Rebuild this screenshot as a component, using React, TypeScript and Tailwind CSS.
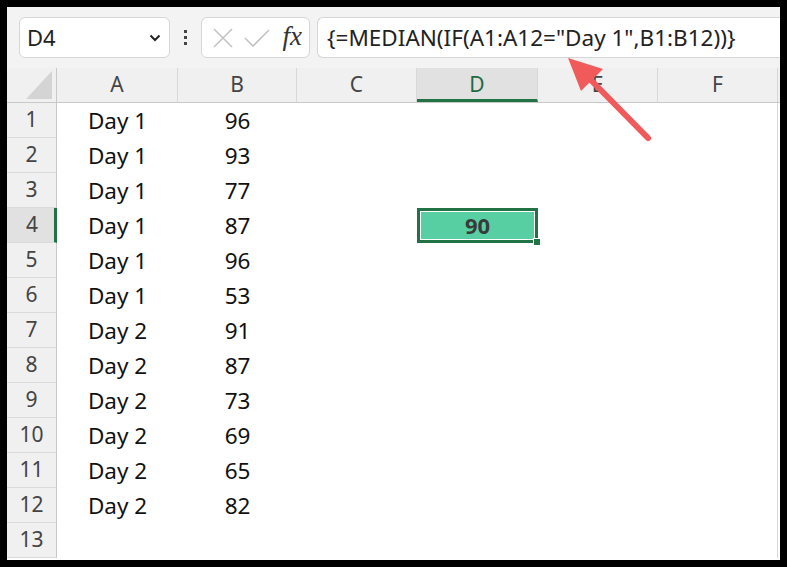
import React from 'react';

const cols = [
  { name: 'A', w: 'w-[121px]' },
  { name: 'B', w: 'w-[119px]' },
  { name: 'C', w: 'w-[120px]' },
  { name: 'D', w: 'w-[121px]' },
  { name: 'E', w: 'w-[120px]' },
  { name: 'F', w: 'w-[120px]' },
];

const data: [string, number][] = [
  ['Day 1', 96],
  ['Day 1', 93],
  ['Day 1', 77],
  ['Day 1', 87],
  ['Day 1', 96],
  ['Day 1', 53],
  ['Day 2', 91],
  ['Day 2', 87],
  ['Day 2', 73],
  ['Day 2', 69],
  ['Day 2', 65],
  ['Day 2', 82],
];

const font = { fontFamily: '"Noto Sans", "Open Sans", sans-serif' };

const App: React.FC = () => {
  const rows = [...data.map((d) => d as [string, number] | null), null];

  return (
    <div className="w-[787px] h-[567px] bg-black p-[7px]" style={font}>
      <div className="relative w-full h-full bg-white overflow-hidden flex flex-col">
        {/* formula bar */}
        <div className="h-[61px] bg-[#f3f3f3] flex items-start pt-[10px] pl-[12px] shrink-0">
          <div className="w-[151px] h-[41px] bg-white border border-[#d6d6d6] rounded-[6px] flex items-center justify-between pl-[7px] pr-[8px]">
            <span className="text-[22px] text-[#222]">D4</span>
            <svg width="12" height="8" viewBox="0 0 12 8">
              <path d="M1.5 1.5 L6 6 L10.5 1.5" fill="none" stroke="#222" strokeWidth="2" />
            </svg>
          </div>
          <div className="w-[31px] h-[41px] flex flex-col items-center justify-center gap-[3px]">
            <span className="w-[3px] h-[3px] bg-[#444]" />
            <span className="w-[3px] h-[3px] bg-[#444]" />
            <span className="w-[3px] h-[3px] bg-[#444]" />
          </div>
          <div className="w-[109px] h-[41px] bg-white border border-[#d6d6d6] rounded-[6px] flex items-center pl-[9px] pr-[7px]">
            <svg width="24" height="24" viewBox="0 0 24 24">
              <path d="M3 3 L21 21 M21 3 L3 21" stroke="#c4c4c4" strokeWidth="1.6" />
            </svg>
            <svg width="30" height="22" viewBox="0 0 30 22" className="ml-[7px]">
              <path d="M3 11 L11 19 L27 3" fill="none" stroke="#c4c4c4" strokeWidth="1.6" />
            </svg>
            <span
              className="ml-auto text-[27px] italic text-[#333] leading-none pb-[3px]"
              style={{ fontFamily: '"Liberation Serif", "DejaVu Serif", serif' }}
            >
              fx
            </span>
          </div>
          <div className="ml-[7px] flex-1 h-[41px] bg-white border border-r-0 border-[#d6d6d6] rounded-l-[6px] flex items-center pl-[9px]">
            <span className="text-[22.5px] text-[#222] whitespace-nowrap">
              {'{=MEDIAN(IF(A1:A12="Day 1",B1:B12))}'}
            </span>
          </div>
        </div>

        {/* column header */}
        <div className="h-[35px] flex bg-[#f0f0f0] border-b border-[#c8c8c8] shrink-0">
          <div className="w-[50px] h-full border-r border-[#c8c8c8] flex items-end justify-end pr-[4px] pb-[3px]">
            <svg width="26" height="28" viewBox="0 0 26 28">
              <polygon points="26,0 26,28 0,28" fill="#d4d4d4" />
            </svg>
          </div>
          {cols.map((c) => (
            <div
              key={c.name}
              className={`${c.w} h-full border-r border-[#d8d8d8] flex items-center justify-center text-[21px] ${
                c.name === 'D'
                  ? 'bg-[#e1e1e1] text-[#1e6b41] border-b-[3px] border-b-[#217346] pt-[3px]'
                  : 'text-[#444]'
              }`}
            >
              {c.name}
            </div>
          ))}
        </div>

        {/* rows */}
        {rows.map((r, i) => (
          <div key={i} className="h-[35px] flex shrink-0">
            <div
              className={`w-[50px] h-full flex items-center justify-center text-[21px] text-[#444] border-b border-[#dadada] ${
                i === 3
                  ? 'bg-[#e1e1e1] border-r-[3px] border-r-[#217346] text-[#1e6b41] pl-[3px]'
                  : 'bg-[#f0f0f0] border-r border-r-[#c8c8c8]'
              }`}
            >
              {i + 1}
            </div>
            <div className="w-[121px] h-full flex items-center justify-center text-[22.5px] text-[#111]">
              {r ? r[0] : ''}
            </div>
            <div className="w-[119px] h-full flex items-center justify-center text-[22.5px] text-[#111]">
              {r ? r[1] : ''}
            </div>
            <div className="w-[120px] h-full" />
            <div className="w-[121px] h-full relative">
              {i === 3 && (
                <div className="absolute inset-0 border-[3px] border-[#217346]">
                  <div className="w-full h-full border border-white bg-[#57cfa3] flex items-center justify-center text-[22px] font-bold text-[#3a3a3a]">
                    90
                  </div>
                  <div className="absolute right-[-6px] bottom-[-6px] w-[8px] h-[8px] bg-[#217346] border border-white" />
                </div>
              )}
            </div>
            <div className="w-[120px] h-full" />
            <div className="w-[120px] h-full border-r border-[#d8d8d8]" />
          </div>
        ))}

        {/* annotation arrow */}
        <svg className="absolute left-0 top-0 pointer-events-none" width="773" height="553" viewBox="0 0 773 553">
          <line x1="641" y1="131" x2="575" y2="64" stroke="#f05a5a" strokeWidth="6" strokeLinecap="round" />
          <polygon points="561,51 596,62 574,84" fill="#f05a5a" />
        </svg>
      </div>
    </div>
  );
};

export default App;
